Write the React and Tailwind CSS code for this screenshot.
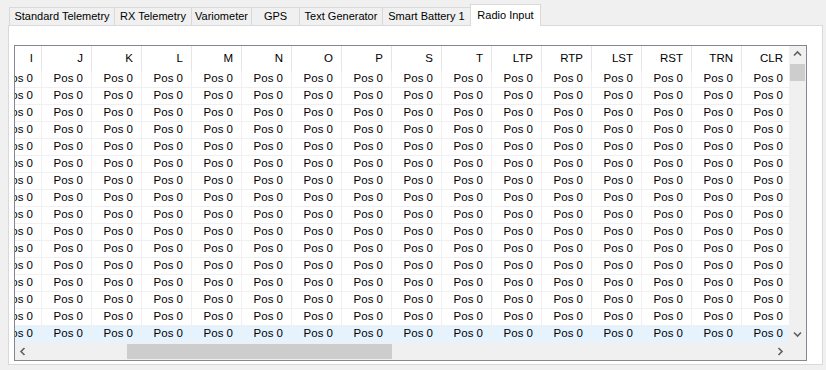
import React from "react";

const tabs = [
  { label: "Standard Telemetry", w: "w-[106px]" },
  { label: "RX Telemetry", w: "w-[78px]" },
  { label: "Variometer", w: "w-[61px]" },
  { label: "GPS", w: "w-[49px]" },
  { label: "Text Generator", w: "w-[84px]" },
  { label: "Smart Battery 1", w: "w-[89px]" },
];

const columns = ["I", "J", "K", "L", "M", "N", "O", "P", "S", "T", "LTP", "RTP", "LST", "RST", "TRN", "CLR"];
const rows = Array.from({ length: 16 }, (_, i) => i);

const Chevron = ({ dir }) => {
  const pts = {
    up: "1,5.5 4.5,2 8,5.5",
    down: "1,2.5 4.5,6 8,2.5",
    left: "5.5,1 2,4.5 5.5,8",
    right: "2.5,1 6,4.5 2.5,8",
  };
  return (
    <svg width="9" height="9" viewBox="0 0 9 9">
      <polyline points={pts[dir]} fill="none" stroke="#606060" strokeWidth="1.6" />
    </svg>
  );
};

const App = () => {
  return (
    <div
      className="w-[826px] h-[370px] bg-[#f0f0f0] text-[11.5px] text-black overflow-hidden whitespace-nowrap"
      style={{ fontFamily: '"Liberation Sans", Arial, sans-serif' }}
    >
      {/* tab strip */}
      <div className="flex items-end h-[25px] pl-[9px] text-[11px]">
        {tabs.map((t, i) => (
          <div
            key={t.label}
            className={`${t.w} h-[18px] flex items-center justify-center border border-b-0 border-[#d9d9d9] bg-[#f0f0f0] leading-none ${i > 0 ? "-ml-px" : ""}`}
          >
            {t.label}
          </div>
        ))}
        <div className="relative z-10 -ml-px -mb-px w-[71px] h-[22px] flex items-start pt-[5px] justify-center border border-b-0 border-[#d9d9d9] bg-white leading-none">
          Radio Input
        </div>
      </div>

      {/* tab pane */}
      <div className="ml-[8px] w-[815px] h-[340px] border border-[#d9d9d9] bg-white pl-[5px] pt-[19px]">
        <div className="w-[793px] h-[316px] border border-[#828790] flex flex-col">
          <div className="flex h-[297px]">
            {/* grid */}
            <div className="w-[774px] overflow-hidden">
              <div className="-ml-[23px] w-[800px]">
                <div className="flex h-[25px]">
                  {columns.map((c) => (
                    <div
                      key={c}
                      className="shrink-0 w-[50px] h-full border-r border-[#e5e5e5] flex items-center justify-end pr-[8px]"
                    >
                      {c}
                    </div>
                  ))}
                </div>
                {rows.map((r) => (
                  <div key={r} className={`flex h-[17px] ${r === 15 ? "bg-[#e5f3ff]" : ""}`}>
                    {columns.map((c) => (
                      <div
                        key={c}
                        className="shrink-0 w-[50px] h-full border-r border-b border-[#f0f0f0] flex items-center justify-end pr-[8px] leading-none"
                      >
                        Pos 0
                      </div>
                    ))}
                  </div>
                ))}
              </div>
            </div>
            {/* vertical scrollbar */}
            <div className="w-[17px] h-full bg-[#f0f0f0] flex flex-col">
              <div className="h-[17px] flex items-center justify-center">
                <Chevron dir="up" />
              </div>
              <div className="flex-1 pt-px">
                <div className="mx-[1px] h-[17px] bg-[#cdcdcd]" />
              </div>
              <div className="h-[17px] flex items-center justify-center">
                <Chevron dir="down" />
              </div>
            </div>
          </div>
          {/* horizontal scrollbar */}
          <div className="flex h-[17px]">
            <div className="w-[774px] bg-[#f0f0f0] flex items-center">
              <div className="w-[17px] h-full flex items-center justify-center">
                <Chevron dir="left" />
              </div>
              <div className="flex-1 h-full flex items-center pl-[95px]">
                <div className="w-[265px] h-[15px] bg-[#cdcdcd]" />
              </div>
              <div className="w-[17px] h-full flex items-center justify-center">
                <Chevron dir="right" />
              </div>
            </div>
            <div className="w-[17px] bg-[#f0f0f0]" />
          </div>
        </div>
      </div>
    </div>
  );
};

export default App;
